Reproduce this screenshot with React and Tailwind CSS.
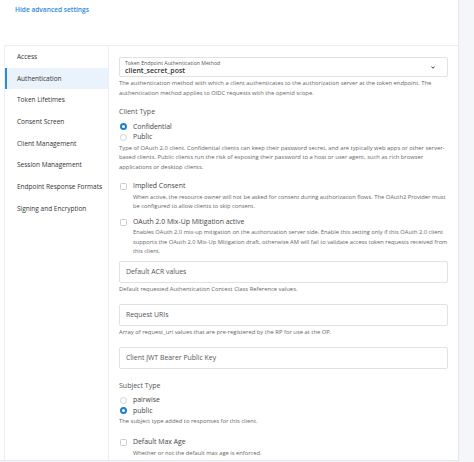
import React from "react";

const navItems = [
  "Access",
  "Authentication",
  "Token Lifetimes",
  "Consent Screen",
  "Client Management",
  "Session Management",
  "Endpoint Response Formats",
  "Signing and Encryption",
];

function Radio({ checked, label }) {
  return (
    <div className="flex h-[10.5px] items-center">
      {checked ? (
        <span className="ml-[0.5px] h-[7px] w-[7px] rounded-full border-[2.2px] border-[#1b7fd4] bg-white" />
      ) : (
        <span className="ml-[0.5px] h-[7px] w-[7px] rounded-full border border-[#cfd3d7] bg-white" />
      )}
      <span className="ml-[6.5px] text-[6.9px] text-[#444]">{label}</span>
    </div>
  );
}

function Checkbox({ label, desc, className }) {
  return (
    <div className={className}>
      <div className="flex h-[11px] items-center">
        <span className="ml-[0.5px] h-[7px] w-[7px] rounded-[1.5px] border border-[#c9ccd0] bg-white" />
        <span className="ml-[6.5px] text-[6.9px] text-[#444]">{label}</span>
      </div>
      <p className="ml-[14px] mt-[0.5px] text-[5.75px] leading-[9.5px] text-[#666]">{desc}</p>
    </div>
  );
}

function TextField({ placeholder, desc, className }) {
  return (
    <div className={className}>
      <div className="flex h-[22px] items-center rounded-[2px] border border-[#dfe1e4] px-[6px] text-[6.9px] text-[#555]">
        {placeholder}
      </div>
      {desc && <p className="mt-[1.5px] text-[5.85px] leading-[9.5px] text-[#666]">{desc}</p>}
    </div>
  );
}

export default function App() {
  return (
    <div className="h-[462px] w-[474px] overflow-hidden bg-[#f4f6f9] font-['Open_Sans',sans-serif]">
      <div className="h-[461px] w-[459px] border-b border-r border-[#e4e6e9] bg-white">
        <div className="ml-[4px] h-[46px] border-b border-[#eceef1] pl-[11px] pt-[5.5px] leading-none">
          <div className="text-[6.6px] font-semibold leading-[8px] text-[#2b8ad6]">Hide advanced settings</div>
        </div>
        <div className="ml-[4px] flex h-[414px] border-l border-[#eceef1]">
          <nav className="w-[104px] shrink-0 border-r border-[#eceef1]">
            {navItems.map((item) => (
              <div
                key={item}
                className={
                  item === "Authentication"
                    ? "flex h-[21.7px] items-center border-l-2 border-[#2b8ad6] bg-[#eaf3fb] pl-[10px] text-[6.5px] text-[#333]"
                    : "flex h-[21.7px] items-center pl-[12px] text-[6.5px] text-[#333]"
                }
              >
                {item}
              </div>
            ))}
          </nav>

          <main className="flex-1 pl-[10px] pr-[10px] pt-[11px]">
            <div className="relative h-[20px] rounded-[2px] border border-[#dfe1e4] pl-[5px]">
              <div className="pt-[2px] text-[5.2px] leading-[6px] text-[#555]">Token Endpoint Authentication Method</div>
              <div className="text-[7px] font-semibold leading-[9px] text-[#333]">client_secret_post</div>
              <svg className="absolute right-[12px] top-[8px]" width="4" height="3" viewBox="0 0 4 3">
                <path d="M0.4 0.5 L2 2.3 L3.6 0.5" fill="none" stroke="#444" strokeWidth="1" />
              </svg>
            </div>
            <p className="mt-[2px] text-[5.85px] leading-[9.5px] text-[#666]">
              The authentication method with which a client authenticates to the authorization server at the token endpoint. The
              authentication method applies to OIDC requests with the openid scope.
            </p>

            <div className="mt-[9px] text-[7px] leading-[10px] text-[#555]">Client Type</div>
            <div className="mt-[4.5px]">
              <Radio checked label="Confidential" />
              <Radio label="Public" />
            </div>
            <p className="mt-[1px] text-[5.85px] leading-[9.5px] text-[#666]">
              Type of OAuth 2.0 client. Confidential clients can keep their password secret, and are typically web apps or other server-based clients. Public clients run the risk of exposing their password to a host or user agent, such as rich browser applications or desktop clients.
            </p>

            <Checkbox
              className="mt-[9px]"
              label="Implied Consent"
              desc="When active, the resource owner will not be asked for consent during authorization flows. The OAuth2 Provider must be configured to allow clients to skip consent."
            />
            <Checkbox
              className="mt-[5px]"
              label="OAuth 2.0 Mix-Up Mitigation active"
              desc="Enables OAuth 2.0 mix-up mitigation on the authorization server side. Enable this setting only if this OAuth 2.0 client supports the OAuth 2.0 Mix-Up Mitigation draft, otherwise AM will fail to validate access token requests received from this client."
            />

            <TextField
              className="mt-[4.5px]"
              placeholder="Default ACR values"
              desc="Default requested Authentication Context Class Reference values."
            />
            <TextField
              className="mt-[10px]"
              placeholder="Request URIs"
              desc="Array of request_uri values that are pre-registered by the RP for use at the OP."
            />
            <TextField className="mt-[10px]" placeholder="Client JWT Bearer Public Key" />

            <div className="mt-[12px] text-[7px] leading-[10px] text-[#555]">Subject Type</div>
            <div className="mt-[4px]">
              <Radio label="pairwise" />
              <Radio checked label="public" />
            </div>
            <p className="mt-[0.5px] text-[5.85px] leading-[9.5px] text-[#666]">The subject type added to responses for this client.</p>

            <Checkbox
              className="mt-[11px]"
              label="Default Max Age"
              desc="Whether or not the default max age is enforced."
            />
          </main>
        </div>
      </div>
    </div>
  );
}
